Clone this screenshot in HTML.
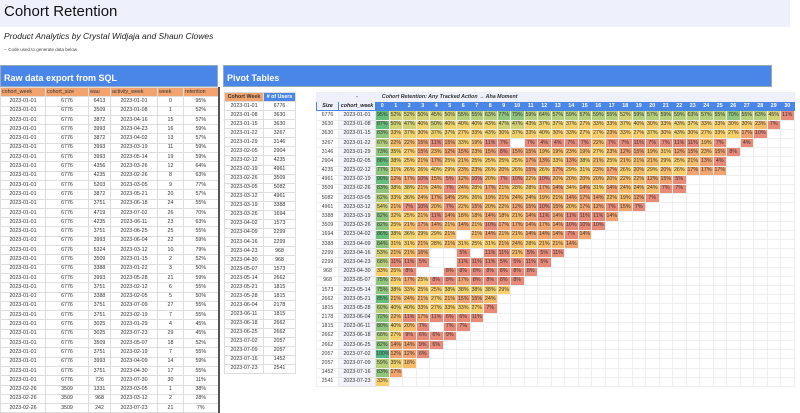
<!DOCTYPE html><html><head><meta charset="utf-8"><style>
*{margin:0;padding:0;box-sizing:border-box}
body{width:800px;height:406px;overflow:hidden;background:#fff;font-family:"Liberation Sans",sans-serif;position:relative;color:#333}
.band{position:absolute;left:0;top:0;width:790px;height:27px;background:#eef0fb}
.t{position:absolute;left:4px;top:3px;font-size:15px;color:#111}
.sub{position:absolute;left:4px;top:31px;font-size:8.5px;font-style:italic;color:#222}
.sm{position:absolute;left:4px;top:47px;font-size:4.5px;color:#444}
.bh{position:absolute;background:#4a86e8;color:#fff;font-weight:bold;font-size:9px;padding:7px 3px;border:1px solid #9ab}
table{border-collapse:collapse;table-layout:fixed;position:absolute;font-size:5.3px}
td{border:1px solid #ddd;text-align:center;white-space:nowrap;overflow:hidden;padding:0;line-height:7px}
#raw{left:0;top:87px;width:218px;border-right:2px solid #555}
#raw tr{height:9.3px}
#raw .h td{text-align:left;padding-left:1px}
#pv{left:224px;top:92px;width:71px;border:1.5px solid #777}
#pv tr{height:9.07px}
#pv .h td{font-weight:bold}
#pv .h td+td{background:#4a86e8;color:#fff}
#hm{left:316px;top:92px;width:478px;border:1.5px solid #555}
#hm tr{height:9.2px}
#hm td{border:1px solid #eee}
#hm td.s{color:#444}
#hm td.w{background:#f3f4fb;border-color:#e3e3e3}
#hm .ti td{font-weight:bold;font-style:italic;background:#eef0fb;text-align:left}
#hm .hh td{background:#4a86e8;color:#fff;font-weight:bold;border-color:#4a86e8}
#hm .hh td.l{background:#eef0fb;color:#222;font-style:italic}
.a{background:#63be7b}.b{background:#8fc67d}.c{background:#b5cf7b}.d{background:#d3d375}.e{background:#f1d36b}.f{background:#fbcf6a}.g{background:#f9bd6a}.h{background:#f3a46e}.k{background:#e98a79}
</style></head><body>
<div class="band"></div><div class="t">Cohort Retention</div>
<div class="sub">Product Analytics by Crystal Widjaja and Shaun Clowes</div>
<div class="sm">-- Code used to generate data below</div>
<div class="bh" style="left:0;top:65px;width:218px;height:22px">Raw data export from SQL</div>
<div class="bh" style="left:223px;top:65px;width:549px;height:22px">Pivot Tables</div>
<table id="raw"><colgroup><col style="width:45px"><col style="width:43px"><col style="width:22px"><col style="width:47px"><col style="width:26px"><col style="width:35px"></colgroup>
<tr class="h"><td>cohort_week</td><td>cohort_size</td><td>wau</td><td>activity_week</td><td>week</td><td>retention</td></tr>
<tr><td>2023-01-01</td><td>6776</td><td>6413</td><td>2023-01-01</td><td>0</td><td>95%</td></tr>
<tr><td>2023-01-01</td><td>6776</td><td>3509</td><td>2023-01-08</td><td>1</td><td>52%</td></tr>
<tr><td>2023-01-01</td><td>6776</td><td>3872</td><td>2023-04-16</td><td>15</td><td>57%</td></tr>
<tr><td>2023-01-01</td><td>6776</td><td>3993</td><td>2023-04-23</td><td>16</td><td>59%</td></tr>
<tr><td>2023-01-01</td><td>6776</td><td>3872</td><td>2023-04-02</td><td>13</td><td>57%</td></tr>
<tr><td>2023-01-01</td><td>6776</td><td>3993</td><td>2023-03-19</td><td>11</td><td>59%</td></tr>
<tr><td>2023-01-01</td><td>6776</td><td>3993</td><td>2023-05-14</td><td>19</td><td>59%</td></tr>
<tr><td>2023-01-01</td><td>6776</td><td>4356</td><td>2023-03-26</td><td>12</td><td>64%</td></tr>
<tr><td>2023-01-01</td><td>6776</td><td>4235</td><td>2023-02-26</td><td>8</td><td>63%</td></tr>
<tr><td>2023-01-01</td><td>6776</td><td>5203</td><td>2023-03-05</td><td>9</td><td>77%</td></tr>
<tr><td>2023-01-01</td><td>6776</td><td>3872</td><td>2023-05-21</td><td>20</td><td>57%</td></tr>
<tr><td>2023-01-01</td><td>6776</td><td>3751</td><td>2023-06-18</td><td>24</td><td>55%</td></tr>
<tr><td>2023-01-01</td><td>6776</td><td>4719</td><td>2023-07-02</td><td>26</td><td>70%</td></tr>
<tr><td>2023-01-01</td><td>6776</td><td>4235</td><td>2023-06-11</td><td>23</td><td>63%</td></tr>
<tr><td>2023-01-01</td><td>6776</td><td>3751</td><td>2023-06-25</td><td>25</td><td>55%</td></tr>
<tr><td>2023-01-01</td><td>6776</td><td>3993</td><td>2023-06-04</td><td>22</td><td>59%</td></tr>
<tr><td>2023-01-01</td><td>6776</td><td>5324</td><td>2023-03-12</td><td>10</td><td>79%</td></tr>
<tr><td>2023-01-01</td><td>6776</td><td>3509</td><td>2023-01-15</td><td>2</td><td>52%</td></tr>
<tr><td>2023-01-01</td><td>6776</td><td>3388</td><td>2023-01-22</td><td>3</td><td>50%</td></tr>
<tr><td>2023-01-01</td><td>6776</td><td>3993</td><td>2023-05-28</td><td>21</td><td>59%</td></tr>
<tr><td>2023-01-01</td><td>6776</td><td>3751</td><td>2023-02-12</td><td>6</td><td>55%</td></tr>
<tr><td>2023-01-01</td><td>6776</td><td>3388</td><td>2023-02-05</td><td>5</td><td>50%</td></tr>
<tr><td>2023-01-01</td><td>6776</td><td>3751</td><td>2023-07-09</td><td>27</td><td>55%</td></tr>
<tr><td>2023-01-01</td><td>6776</td><td>3751</td><td>2023-02-19</td><td>7</td><td>55%</td></tr>
<tr><td>2023-01-01</td><td>6776</td><td>3025</td><td>2023-01-29</td><td>4</td><td>45%</td></tr>
<tr><td>2023-01-01</td><td>6776</td><td>3025</td><td>2023-07-23</td><td>29</td><td>45%</td></tr>
<tr><td>2023-01-01</td><td>6776</td><td>3509</td><td>2023-05-07</td><td>18</td><td>52%</td></tr>
<tr><td>2023-01-01</td><td>6776</td><td>3751</td><td>2023-02-19</td><td>7</td><td>55%</td></tr>
<tr><td>2023-01-01</td><td>6776</td><td>3993</td><td>2023-04-09</td><td>14</td><td>59%</td></tr>
<tr><td>2023-01-01</td><td>6776</td><td>3751</td><td>2023-04-30</td><td>17</td><td>55%</td></tr>
<tr><td>2023-01-01</td><td>6776</td><td>726</td><td>2023-07-30</td><td>30</td><td>11%</td></tr>
<tr><td>2023-02-26</td><td>3509</td><td>1331</td><td>2023-03-05</td><td>1</td><td>38%</td></tr>
<tr><td>2023-02-26</td><td>3509</td><td>968</td><td>2023-03-12</td><td>2</td><td>28%</td></tr>
<tr><td>2023-02-26</td><td>3509</td><td>242</td><td>2023-07-23</td><td>21</td><td>7%</td></tr>
</table>
<table id="pv"><colgroup><col style="width:39px"><col style="width:32px"></colgroup>
<tr class="h"><td>Cohort Week</td><td># of Users</td></tr>
<tr><td>2023-01-01</td><td>6776</td></tr><tr><td>2023-01-08</td><td>3630</td></tr><tr><td>2023-01-15</td><td>3630</td></tr><tr><td>2023-01-22</td><td>3267</td></tr><tr><td>2023-01-29</td><td>3146</td></tr><tr><td>2023-02-05</td><td>2904</td></tr><tr><td>2023-02-12</td><td>4235</td></tr><tr><td>2023-02-19</td><td>4961</td></tr><tr><td>2023-02-26</td><td>3509</td></tr><tr><td>2023-03-05</td><td>5082</td></tr><tr><td>2023-03-12</td><td>4961</td></tr><tr><td>2023-03-19</td><td>3388</td></tr><tr><td>2023-03-26</td><td>1694</td></tr><tr><td>2023-04-02</td><td>1573</td></tr><tr><td>2023-04-09</td><td>2299</td></tr><tr><td>2023-04-16</td><td>2299</td></tr><tr><td>2023-04-23</td><td>968</td></tr><tr><td>2023-04-30</td><td>968</td></tr><tr><td>2023-05-07</td><td>1573</td></tr><tr><td>2023-05-14</td><td>2662</td></tr><tr><td>2023-05-21</td><td>1815</td></tr><tr><td>2023-05-28</td><td>1815</td></tr><tr><td>2023-06-04</td><td>2178</td></tr><tr><td>2023-06-11</td><td>1815</td></tr><tr><td>2023-06-18</td><td>2662</td></tr><tr><td>2023-06-25</td><td>2662</td></tr><tr><td>2023-07-02</td><td>2057</td></tr><tr><td>2023-07-09</td><td>2057</td></tr><tr><td>2023-07-16</td><td>1452</td></tr><tr><td>2023-07-23</td><td>2541</td></tr>
</table>
<table id="hm"><colgroup><col style="width:22px"><col style="width:37px"><col span="31" style="width:13.5px"></colgroup>
<tr class="ti"><td></td><td style="text-align:center">-</td><td colspan="31">&nbsp;&nbsp;&nbsp;&nbsp;Cohort Retention: Any Tracked Action → Aha Moment</td></tr>
<tr class="hh"><td class="l">Size</td><td class="l">cohort_week</td><td>0</td><td>1</td><td>2</td><td>3</td><td>4</td><td>5</td><td>6</td><td>7</td><td>8</td><td>9</td><td>10</td><td>11</td><td>12</td><td>13</td><td>14</td><td>15</td><td>16</td><td>17</td><td>18</td><td>19</td><td>20</td><td>21</td><td>22</td><td>23</td><td>24</td><td>25</td><td>26</td><td>27</td><td>28</td><td>29</td><td>30</td></tr>
<tr><td class="s">6776</td><td class="w">2023-01-01</td><td class="a">95%</td><td class="d">52%</td><td class="d">52%</td><td class="d">50%</td><td class="d">45%</td><td class="d">50%</td><td class="c">55%</td><td class="c">55%</td><td class="c">63%</td><td class="b">77%</td><td class="b">79%</td><td class="c">59%</td><td class="c">64%</td><td class="c">57%</td><td class="c">59%</td><td class="c">57%</td><td class="c">59%</td><td class="c">55%</td><td class="d">52%</td><td class="c">59%</td><td class="c">57%</td><td class="c">59%</td><td class="c">59%</td><td class="c">63%</td><td class="c">57%</td><td class="c">55%</td><td class="b">70%</td><td class="c">55%</td><td class="c">63%</td><td class="d">45%</td><td class="k">11%</td></tr>
<tr><td class="s">3630</td><td class="w">2023-01-08</td><td class="a">87%</td><td class="d">50%</td><td class="d">47%</td><td class="e">40%</td><td class="d">50%</td><td class="e">40%</td><td class="e">40%</td><td class="e">40%</td><td class="e">43%</td><td class="d">47%</td><td class="d">47%</td><td class="e">43%</td><td class="e">37%</td><td class="e">37%</td><td class="e">37%</td><td class="f">27%</td><td class="f">33%</td><td class="f">33%</td><td class="e">37%</td><td class="e">40%</td><td class="f">30%</td><td class="f">33%</td><td class="e">43%</td><td class="e">37%</td><td class="f">33%</td><td class="f">33%</td><td class="f">30%</td><td class="f">30%</td><td class="g">23%</td><td class="k">7%</td><td></td></tr>
<tr><td class="s">3630</td><td class="w">2023-01-15</td><td class="b">83%</td><td class="f">33%</td><td class="e">37%</td><td class="f">30%</td><td class="e">37%</td><td class="e">37%</td><td class="f">27%</td><td class="f">33%</td><td class="e">43%</td><td class="f">30%</td><td class="e">37%</td><td class="f">33%</td><td class="e">40%</td><td class="f">30%</td><td class="f">33%</td><td class="f">27%</td><td class="f">27%</td><td class="g">23%</td><td class="f">33%</td><td class="f">27%</td><td class="e">37%</td><td class="f">30%</td><td class="e">43%</td><td class="f">30%</td><td class="f">27%</td><td class="f">33%</td><td class="f">27%</td><td class="h">17%</td><td class="k">10%</td><td></td><td></td></tr>
<tr><td class="s">3267</td><td class="w">2023-01-22</td><td class="c">67%</td><td class="g">22%</td><td class="g">22%</td><td class="h">15%</td><td class="k">11%</td><td class="h">15%</td><td class="f">33%</td><td class="g">19%</td><td class="k">11%</td><td class="k">7%</td><td></td><td class="k">7%</td><td class="k">4%</td><td class="k">4%</td><td class="k">7%</td><td class="k">7%</td><td class="g">22%</td><td class="k">7%</td><td class="k">7%</td><td class="k">11%</td><td class="k">7%</td><td class="k">7%</td><td class="k">11%</td><td class="k">11%</td><td class="g">19%</td><td class="k">7%</td><td></td><td class="k">4%</td><td></td><td></td><td></td></tr>
<tr><td class="s">3146</td><td class="w">2023-01-29</td><td class="b">73%</td><td class="e">35%</td><td class="f">27%</td><td class="h">15%</td><td class="g">23%</td><td class="h">12%</td><td class="h">15%</td><td class="g">23%</td><td class="h">15%</td><td class="k">8%</td><td class="h">15%</td><td class="h">15%</td><td class="g">19%</td><td class="g">19%</td><td class="g">23%</td><td class="g">19%</td><td class="f">27%</td><td class="g">23%</td><td class="h">12%</td><td class="h">15%</td><td class="g">19%</td><td class="f">31%</td><td class="h">12%</td><td class="h">15%</td><td class="g">23%</td><td class="h">15%</td><td class="k">8%</td><td></td><td></td><td></td><td></td></tr>
<tr><td class="s">2904</td><td class="w">2023-02-05</td><td class="a">88%</td><td class="e">38%</td><td class="f">25%</td><td class="g">21%</td><td class="h">17%</td><td class="f">25%</td><td class="g">21%</td><td class="f">25%</td><td class="f">25%</td><td class="f">25%</td><td class="f">25%</td><td class="h">17%</td><td class="h">13%</td><td class="f">33%</td><td class="h">13%</td><td class="e">38%</td><td class="g">21%</td><td class="f">25%</td><td class="g">21%</td><td class="g">21%</td><td class="g">21%</td><td class="f">29%</td><td class="f">25%</td><td class="g">21%</td><td class="h">13%</td><td class="k">4%</td><td></td><td></td><td></td><td></td><td></td></tr>
<tr><td class="s">4235</td><td class="w">2023-02-12</td><td class="b">77%</td><td class="f">31%</td><td class="f">26%</td><td class="f">26%</td><td class="e">40%</td><td class="f">29%</td><td class="g">23%</td><td class="g">23%</td><td class="f">26%</td><td class="g">20%</td><td class="f">26%</td><td class="h">15%</td><td class="f">26%</td><td class="h">17%</td><td class="f">29%</td><td class="f">31%</td><td class="g">23%</td><td class="h">17%</td><td class="f">26%</td><td class="g">20%</td><td class="f">29%</td><td class="g">20%</td><td class="f">26%</td><td class="h">17%</td><td class="h">17%</td><td class="h">17%</td><td></td><td></td><td></td><td></td><td></td></tr>
<tr><td class="s">4961</td><td class="w">2023-02-19</td><td class="a">90%</td><td class="h">12%</td><td class="h">17%</td><td class="k">10%</td><td class="h">15%</td><td class="k">5%</td><td class="h">12%</td><td class="k">10%</td><td class="g">20%</td><td class="k">7%</td><td class="k">10%</td><td class="g">22%</td><td class="k">10%</td><td class="g">20%</td><td class="g">20%</td><td class="g">20%</td><td class="g">20%</td><td class="g">20%</td><td class="g">22%</td><td class="g">22%</td><td class="h">12%</td><td class="h">15%</td><td class="k">5%</td><td></td><td></td><td></td><td></td><td></td><td></td><td></td><td></td></tr>
<tr><td class="s">3509</td><td class="w">2023-02-26</td><td class="b">83%</td><td class="e">38%</td><td class="e">38%</td><td class="g">21%</td><td class="g">24%</td><td class="k">7%</td><td class="g">24%</td><td class="f">28%</td><td class="h">17%</td><td class="g">21%</td><td class="f">28%</td><td class="f">28%</td><td class="h">17%</td><td class="h">14%</td><td class="f">34%</td><td class="h">14%</td><td class="f">31%</td><td class="h">14%</td><td class="g">24%</td><td class="g">24%</td><td class="g">24%</td><td class="k">7%</td><td class="k">7%</td><td></td><td></td><td></td><td></td><td></td><td></td><td></td><td></td></tr>
<tr><td class="s">5082</td><td class="w">2023-03-05</td><td class="c">62%</td><td class="f">33%</td><td class="e">36%</td><td class="g">24%</td><td class="h">17%</td><td class="h">14%</td><td class="f">29%</td><td class="f">26%</td><td class="g">19%</td><td class="g">21%</td><td class="g">24%</td><td class="g">24%</td><td class="g">19%</td><td class="g">21%</td><td class="h">14%</td><td class="h">17%</td><td class="h">14%</td><td class="g">22%</td><td class="g">19%</td><td class="h">12%</td><td class="k">7%</td><td></td><td></td><td></td><td></td><td></td><td></td><td></td><td></td><td></td><td></td></tr>
<tr><td class="s">4961</td><td class="w">2023-03-12</td><td class="d">54%</td><td class="g">21%</td><td class="k">7%</td><td class="k">10%</td><td class="g">20%</td><td class="k">7%</td><td class="g">22%</td><td class="h">15%</td><td class="g">20%</td><td class="g">22%</td><td class="h">12%</td><td class="h">15%</td><td class="k">10%</td><td class="h">15%</td><td class="g">20%</td><td class="h">17%</td><td class="h">12%</td><td class="k">7%</td><td class="h">15%</td><td class="k">7%</td><td></td><td></td><td></td><td></td><td></td><td></td><td></td><td></td><td></td><td></td><td></td></tr>
<tr><td class="s">3388</td><td class="w">2023-03-19</td><td class="b">82%</td><td class="f">32%</td><td class="f">25%</td><td class="g">21%</td><td class="k">11%</td><td class="h">14%</td><td class="g">18%</td><td class="g">18%</td><td class="h">14%</td><td class="g">18%</td><td class="g">21%</td><td class="h">14%</td><td class="k">11%</td><td class="h">14%</td><td class="k">11%</td><td class="k">11%</td><td class="k">11%</td><td class="h">14%</td><td></td><td></td><td></td><td></td><td></td><td></td><td></td><td></td><td></td><td></td><td></td><td></td><td></td></tr>
<tr><td class="s">3509</td><td class="w">2023-03-26</td><td class="b">82%</td><td class="f">25%</td><td class="g">21%</td><td class="h">17%</td><td class="h">14%</td><td class="g">21%</td><td class="h">14%</td><td class="g">21%</td><td class="k">10%</td><td class="h">17%</td><td class="h">17%</td><td class="h">14%</td><td class="h">17%</td><td class="h">14%</td><td class="k">10%</td><td class="k">10%</td><td class="k">10%</td><td></td><td></td><td></td><td></td><td></td><td></td><td></td><td></td><td></td><td></td><td></td><td></td><td></td><td></td></tr>
<tr><td class="s">1694</td><td class="w">2023-04-02</td><td class="a">86%</td><td class="e">38%</td><td class="e">36%</td><td class="f">29%</td><td class="f">29%</td><td class="g">21%</td><td></td><td class="g">21%</td><td class="h">14%</td><td class="g">21%</td><td class="g">21%</td><td class="h">14%</td><td class="h">14%</td><td class="h">14%</td><td class="k">7%</td><td class="h">14%</td><td></td><td></td><td></td><td></td><td></td><td></td><td></td><td></td><td></td><td></td><td></td><td></td><td></td><td></td><td></td></tr>
<tr><td class="s">3388</td><td class="w">2023-04-09</td><td class="b">84%</td><td class="f">31%</td><td class="f">31%</td><td class="g">21%</td><td class="f">28%</td><td class="g">21%</td><td class="f">31%</td><td class="f">25%</td><td class="f">31%</td><td class="g">21%</td><td class="g">24%</td><td class="f">28%</td><td class="g">21%</td><td class="g">21%</td><td class="h">14%</td><td></td><td></td><td></td><td></td><td></td><td></td><td></td><td></td><td></td><td></td><td></td><td></td><td></td><td></td><td></td><td></td></tr>
<tr><td class="s">2299</td><td class="w">2023-04-16</td><td class="d">53%</td><td class="g">21%</td><td class="g">21%</td><td class="h">16%</td><td></td><td></td><td class="k">5%</td><td></td><td class="k">11%</td><td class="k">11%</td><td class="g">21%</td><td class="k">5%</td><td class="k">5%</td><td class="k">11%</td><td></td><td></td><td></td><td></td><td></td><td></td><td></td><td></td><td></td><td></td><td></td><td></td><td></td><td></td><td></td><td></td><td></td></tr>
<tr><td class="s">2299</td><td class="w">2023-04-23</td><td class="c">68%</td><td class="k">11%</td><td class="k">11%</td><td class="k">5%</td><td></td><td></td><td class="k">11%</td><td class="k">11%</td><td class="k">11%</td><td class="k">5%</td><td class="k">5%</td><td class="k">11%</td><td class="k">5%</td><td></td><td></td><td></td><td></td><td></td><td></td><td></td><td></td><td></td><td></td><td></td><td></td><td></td><td></td><td></td><td></td><td></td><td></td></tr>
<tr><td class="s">968</td><td class="w">2023-04-30</td><td class="f">33%</td><td class="f">25%</td><td class="k">8%</td><td></td><td></td><td class="k">8%</td><td class="k">8%</td><td class="k">8%</td><td class="k">8%</td><td class="k">8%</td><td class="k">8%</td><td class="k">8%</td><td></td><td></td><td></td><td></td><td></td><td></td><td></td><td></td><td></td><td></td><td></td><td></td><td></td><td></td><td></td><td></td><td></td><td></td><td></td></tr>
<tr><td class="s">968</td><td class="w">2023-05-07</td><td class="b">75%</td><td class="f">25%</td><td class="h">17%</td><td class="f">25%</td><td class="k">8%</td><td class="k">8%</td><td class="h">17%</td><td class="k">8%</td><td class="k">8%</td><td class="k">8%</td><td class="k">8%</td><td></td><td></td><td></td><td></td><td></td><td></td><td></td><td></td><td></td><td></td><td></td><td></td><td></td><td></td><td></td><td></td><td></td><td></td><td></td><td></td></tr>
<tr><td class="s">1573</td><td class="w">2023-05-14</td><td class="b">75%</td><td class="e">38%</td><td class="f">33%</td><td class="f">25%</td><td class="f">25%</td><td class="e">38%</td><td class="e">38%</td><td class="e">38%</td><td class="e">38%</td><td class="f">29%</td><td></td><td></td><td></td><td></td><td></td><td></td><td></td><td></td><td></td><td></td><td></td><td></td><td></td><td></td><td></td><td></td><td></td><td></td><td></td><td></td><td></td></tr>
<tr><td class="s">2662</td><td class="w">2023-05-21</td><td class="a">85%</td><td class="g">21%</td><td class="g">24%</td><td class="g">21%</td><td class="f">27%</td><td class="g">21%</td><td class="h">15%</td><td class="h">15%</td><td class="g">24%</td><td></td><td></td><td></td><td></td><td></td><td></td><td></td><td></td><td></td><td></td><td></td><td></td><td></td><td></td><td></td><td></td><td></td><td></td><td></td><td></td><td></td><td></td></tr>
<tr><td class="s">1815</td><td class="w">2023-05-28</td><td class="c">60%</td><td class="e">40%</td><td class="e">40%</td><td class="f">33%</td><td class="f">27%</td><td class="f">33%</td><td class="f">33%</td><td class="f">27%</td><td class="k">7%</td><td></td><td></td><td></td><td></td><td></td><td></td><td></td><td></td><td></td><td></td><td></td><td></td><td></td><td></td><td></td><td></td><td></td><td></td><td></td><td></td><td></td><td></td></tr>
<tr><td class="s">2178</td><td class="w">2023-06-04</td><td class="b">72%</td><td class="g">22%</td><td class="k">11%</td><td class="h">17%</td><td class="k">11%</td><td class="k">6%</td><td class="k">6%</td><td class="k">11%</td><td></td><td></td><td></td><td></td><td></td><td></td><td></td><td></td><td></td><td></td><td></td><td></td><td></td><td></td><td></td><td></td><td></td><td></td><td></td><td></td><td></td><td></td><td></td></tr>
<tr><td class="s">1815</td><td class="w">2023-06-11</td><td class="b">80%</td><td class="e">40%</td><td class="g">20%</td><td class="k">7%</td><td></td><td class="k">7%</td><td class="k">7%</td><td></td><td></td><td></td><td></td><td></td><td></td><td></td><td></td><td></td><td></td><td></td><td></td><td></td><td></td><td></td><td></td><td></td><td></td><td></td><td></td><td></td><td></td><td></td><td></td></tr>
<tr><td class="s">2662</td><td class="w">2023-06-18</td><td class="c">68%</td><td class="f">27%</td><td class="k">9%</td><td class="k">6%</td><td class="k">6%</td><td class="k">9%</td><td></td><td></td><td></td><td></td><td></td><td></td><td></td><td></td><td></td><td></td><td></td><td></td><td></td><td></td><td></td><td></td><td></td><td></td><td></td><td></td><td></td><td></td><td></td><td></td><td></td></tr>
<tr><td class="s">2662</td><td class="w">2023-06-25</td><td class="b">82%</td><td class="h">14%</td><td class="h">14%</td><td class="k">9%</td><td class="k">6%</td><td></td><td></td><td></td><td></td><td></td><td></td><td></td><td></td><td></td><td></td><td></td><td></td><td></td><td></td><td></td><td></td><td></td><td></td><td></td><td></td><td></td><td></td><td></td><td></td><td></td><td></td></tr>
<tr><td class="s">2057</td><td class="w">2023-07-02</td><td class="a" style="background:#4fb587">100%</td><td class="h">12%</td><td class="h">12%</td><td class="k">6%</td><td></td><td></td><td></td><td></td><td></td><td></td><td></td><td></td><td></td><td></td><td></td><td></td><td></td><td></td><td></td><td></td><td></td><td></td><td></td><td></td><td></td><td></td><td></td><td></td><td></td><td></td><td></td></tr>
<tr><td class="s">2057</td><td class="w">2023-07-09</td><td class="c">59%</td><td class="e">35%</td><td class="g">18%</td><td></td><td></td><td></td><td></td><td></td><td></td><td></td><td></td><td></td><td></td><td></td><td></td><td></td><td></td><td></td><td></td><td></td><td></td><td></td><td></td><td></td><td></td><td></td><td></td><td></td><td></td><td></td><td></td></tr>
<tr><td class="s">1452</td><td class="w">2023-07-16</td><td class="b">83%</td><td class="h">17%</td><td></td><td></td><td></td><td></td><td></td><td></td><td></td><td></td><td></td><td></td><td></td><td></td><td></td><td></td><td></td><td></td><td></td><td></td><td></td><td></td><td></td><td></td><td></td><td></td><td></td><td></td><td></td><td></td><td></td></tr>
<tr><td class="s">2541</td><td class="w">2023-07-23</td><td class="f">33%</td><td></td><td></td><td></td><td></td><td></td><td></td><td></td><td></td><td></td><td></td><td></td><td></td><td></td><td></td><td></td><td></td><td></td><td></td><td></td><td></td><td></td><td></td><td></td><td></td><td></td><td></td><td></td><td></td><td></td><td></td></tr>
</table>
</body></html>
